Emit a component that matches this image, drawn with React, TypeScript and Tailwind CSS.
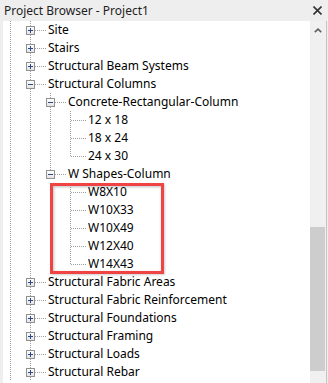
import React from 'react';

type Kind = 'closed' | 'open' | 'leaf';
type Item = { label: string; depth: number; kind: Kind };

const ITEMS: Item[] = [
  { label: 'Site', depth: 1, kind: 'closed' },
  { label: 'Stairs', depth: 1, kind: 'closed' },
  { label: 'Structural Beam Systems', depth: 1, kind: 'closed' },
  { label: 'Structural Columns', depth: 1, kind: 'open' },
  { label: 'Concrete-Rectangular-Column', depth: 2, kind: 'open' },
  { label: '12 x 18', depth: 3, kind: 'leaf' },
  { label: '18 x 24', depth: 3, kind: 'leaf' },
  { label: '24 x 30', depth: 3, kind: 'leaf' },
  { label: 'W Shapes-Column', depth: 2, kind: 'open' },
  { label: 'W8X10', depth: 3, kind: 'leaf' },
  { label: 'W10X33', depth: 3, kind: 'leaf' },
  { label: 'W10X49', depth: 3, kind: 'leaf' },
  { label: 'W12X40', depth: 3, kind: 'leaf' },
  { label: 'W14X43', depth: 3, kind: 'leaf' },
  { label: 'Structural Fabric Areas', depth: 1, kind: 'closed' },
  { label: 'Structural Fabric Reinforcement', depth: 1, kind: 'closed' },
  { label: 'Structural Foundations', depth: 1, kind: 'closed' },
  { label: 'Structural Framing', depth: 1, kind: 'closed' },
  { label: 'Structural Loads', depth: 1, kind: 'closed' },
  { label: 'Structural Rebar', depth: 1, kind: 'closed' },
];

const ROW = 18;
const LINE = '#a0a0a0';

// does the item at index i have a sibling further down (before its parent ends)?
function hasNext(i: number): boolean {
  const d = ITEMS[i].depth;
  for (let j = i + 1; j < ITEMS.length; j++) {
    if (ITEMS[j].depth < d) return false;
    if (ITEMS[j].depth === d) return true;
  }
  return d === 1; // top level list keeps going below the view
}

// for depth k, does the ancestor of item i at that depth continue?
function ancestorContinues(i: number, k: number): boolean {
  for (let j = i - 1; j >= 0; j--) {
    if (ITEMS[j].depth === k) return hasNext(j);
  }
  return true;
}

function Guides({ index }: { index: number }) {
  const item = ITEMS[index];
  const cx = 7 + 20 * item.depth;
  const width = 25 + 20 * item.depth;
  const mid = 9;
  const verticals: number[] = [7];
  for (let k = 1; k < item.depth; k++) {
    if (ancestorContinues(index, k)) verticals.push(7 + 20 * k);
  }
  const next = hasNext(index);
  return (
    <svg width={width} height={ROW} className="shrink-0" shapeRendering="crispEdges">
      {verticals.map((x) => (
        <line key={x} x1={x + 0.5} y1={0} x2={x + 0.5} y2={ROW} stroke={LINE} strokeDasharray="1 1" />
      ))}
      <line x1={cx + 0.5} y1={0} x2={cx + 0.5} y2={next ? ROW : mid} stroke={LINE} strokeDasharray="1 1" />
      <line x1={cx + 1} y1={mid + 0.5} x2={cx + 17} y2={mid + 0.5} stroke={LINE} strokeDasharray="1 1" />
      {item.kind !== 'leaf' && (
        <g>
          <defs>
            <linearGradient id={`g${index}`} x1="0" y1="0" x2="0" y2="1">
              <stop offset="0" stopColor="#ffffff" />
              <stop offset="1" stopColor="#e2e2e2" />
            </linearGradient>
          </defs>
          <rect x={cx - 3.5} y={mid - 3.5} width={8} height={8} fill={`url(#g${index})`} stroke="#919191" />
          <line x1={cx - 2} y1={mid + 0.5} x2={cx + 3} y2={mid + 0.5} stroke="#2c4a85" />
          {item.kind === 'closed' && (
            <line x1={cx + 0.5} y1={mid - 2} x2={cx + 0.5} y2={mid + 3} stroke="#2c4a85" />
          )}
        </g>
      )}
    </svg>
  );
}

export default function App() {
  return (
    <div
      className="w-[328px] h-[383px] overflow-hidden flex flex-col bg-[#eeeeee] text-black"
      style={{ fontFamily: '"Noto Sans", "Open Sans", sans-serif' }}
    >
      <div className="h-[21px] shrink-0 flex items-center justify-between pl-[4px] pr-[6px]">
        <span className="text-[12px] leading-none text-[#1e1e1e]">Project Browser - Project1</span>
        <svg width="9" height="9" viewBox="0 0 9 9">
          <path d="M0.5 0.5 L8.5 8.5 M8.5 0.5 L0.5 8.5" stroke="#333" strokeWidth="1.6" />
        </svg>
      </div>
      <div className="flex flex-1 min-h-0">
        <div className="w-[3px] shrink-0" />
        <div className="relative flex-1 bg-white">
          {ITEMS.map((item, i) => (
            <div key={i} className="h-[18px] flex items-center">
              <Guides index={i} />
              <span className="text-[12px] leading-none whitespace-nowrap">{item.label}</span>
            </div>
          ))}
          <div className="absolute left-[47px] top-[162px] w-[114px] h-[91px] border-[3px] border-[#f04444] shadow-[inset_1px_1px_3px_rgba(0,0,0,0.25),1px_1px_2px_rgba(0,0,0,0.2)]" />
        </div>
        <div className="w-[15px] shrink-0 flex flex-col bg-[#f0f0f0]">
          <div className="h-[18px] flex items-center justify-center">
            <svg width="8" height="5" viewBox="0 0 8 5">
              <path d="M0.8 4.2 L4 1.2 L7.2 4.2" stroke="#606060" strokeWidth="1.6" fill="none" />
            </svg>
          </div>
          <div className="mt-[188px] h-[144px] bg-[#cdcdcd]" />
        </div>
        <div className="w-[1px] shrink-0 bg-[#f0f0f0]" />
        <div className="w-[1px] shrink-0 bg-[#c4c4c4]" />
        <div className="w-[1px] shrink-0 bg-[#eeeeee]" />
      </div>
    </div>
  );
}
